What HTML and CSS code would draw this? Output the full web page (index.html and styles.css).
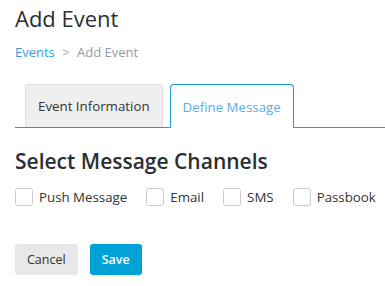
FILE: index.html
```html
<!DOCTYPE html>
<html lang="en">
<head>
  <meta charset="UTF-8">
  <meta name="viewport" content="width=device-width, initial-scale=1.0">
  <title>Add Event</title>
  <link rel="stylesheet" href="styles.css">
</head>
<body>
  <header class="page-header">
    <h1>Add Event</h1>
    <nav class="breadcrumb">
      <a href="#">Events</a>
      <span class="sep">&gt;</span>
      <span class="current">Add Event</span>
    </nav>
  </header>

  <!-- Tabs -->
  <ul class="tabs">
    <li class="tab">Event Information</li>
    <li class="tab active">Define Message</li>
  </ul>

  <section class="channels">
    <h2>Select Message Channels</h2>
    <div class="channel-list">
      <label class="channel"><input type="checkbox"><span class="box"></span>Push Message</label>
      <label class="channel"><input type="checkbox"><span class="box"></span>Email</label>
      <label class="channel"><input type="checkbox"><span class="box"></span>SMS</label>
      <label class="channel"><input type="checkbox"><span class="box"></span>Passbook</label>
    </div>
  </section>

  <div class="actions">
    <button class="btn btn-cancel">Cancel</button>
    <button class="btn btn-save">Save</button>
  </div>
</body>
</html>
```

FILE: styles.css
```css
/* Page basics */
body {
  font-family: "Open Sans", "Noto Sans", sans-serif;
  margin: 0;
  padding: 0 0 0 15px;
  background: #fff;
  color: #333;
}

.page-header h1 {
  margin: 0;
  padding-top: 4px;
  font-size: 22px;
  font-weight: 400;
  line-height: 28px;
  color: #2b2f33;
}

.breadcrumb {
  margin-top: 11px;
  font-size: 13px;
  line-height: 18px;
  color: #999;
}

.breadcrumb a {
  color: #3a9bd9;
  text-decoration: none;
}

.breadcrumb .sep {
  margin: 0 4px;
  color: #aaa;
}

/* Tabs */
.tabs {
  list-style: none;
  margin: 23px 0 0;
  padding: 0 0 0 10px;
  display: flex;
  gap: 7px;
  border-bottom: 1px solid #1a9fd0;
}

.tab {
  height: 42px;
  padding: 0 12px;
  display: flex;
  align-items: center;
  font-size: 13.3px;
  white-space: nowrap;
  color: #333;
  background: #efefef;
  border: 1px solid #ddd;
  border-bottom: none;
  border-radius: 4px 4px 0 0;
  margin-bottom: -1px;
}

.tab.active {
  background: #fff;
  color: #5aaee0;
  border-color: #1a9fd0;
  height: 43px;
}

/* Channels */
.channels h2 {
  margin: 18px 0 0;
  font-size: 21px;
  font-weight: 600;
  line-height: 30px;
  color: #2b2f33;
}

.channel-list {
  display: flex;
  gap: 19px;
  margin-top: 12px;
}

.channel {
  display: flex;
  align-items: center;
  gap: 6px;
  font-size: 13.3px;
  white-space: nowrap;
  color: #333;
}

.channel input {
  display: none;
}

.channel .box {
  width: 16px;
  height: 16px;
  border: 1px solid #ccc;
  border-radius: 3px;
  background: #fff;
}

/* Buttons */
.actions {
  display: flex;
  gap: 12px;
  margin-top: 38px;
}

.btn {
  height: 31px;
  padding: 0 12px;
  font-family: inherit;
  font-size: 12.5px;
  border: none;
  border-radius: 3px;
  cursor: pointer;
}

.btn-cancel {
  background: #e7e7e7;
  color: #333;
}

.btn-save {
  background: #00a2d8;
  color: #fff;
  font-weight: 600;
}
```
